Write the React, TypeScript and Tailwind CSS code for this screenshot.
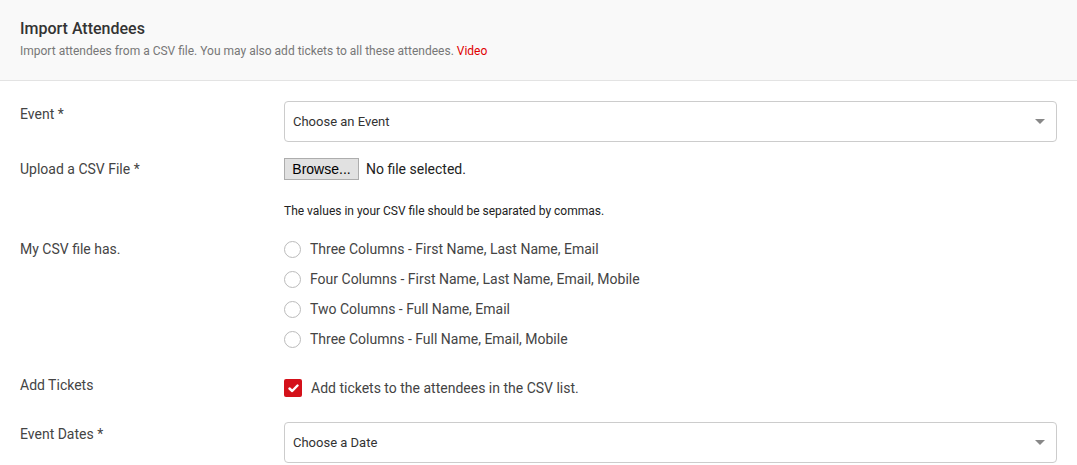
import { useState } from 'react';

const options = [
  'Three Columns - First Name, Last Name, Email',
  'Four Columns - First Name, Last Name, Email, Mobile',
  'Two Columns - Full Name, Email',
  'Three Columns - Full Name, Email, Mobile',
];

function SelectBox({ placeholder }: { placeholder: string }) {
  return (
    <div className="flex h-[41px] items-center justify-between rounded-[4px] border border-[#cccccc] bg-white pl-2 pr-[11px]">
      <span className="text-[13px] text-[#333]">{placeholder}</span>
      <svg width="10" height="5" viewBox="0 0 10 5">
        <path d="M0 0 L10 0 L5 5 Z" fill="#888" />
      </svg>
    </div>
  );
}

export default function App() {
  const [format, setFormat] = useState<number | null>(null);
  const [addTickets, setAddTickets] = useState(true);

  return (
    <div className="min-h-screen bg-white font-['Roboto',sans-serif] text-[14px] text-[#444]">
      <div className="h-[81px] border-b border-[#e3e3e3] bg-[#f9f9f9] px-5 pt-[19px]">
        <h1 className="text-[16px] leading-[20px] font-medium text-[#333]">Import Attendees</h1>
        <p className="mt-[4px] text-[12px] leading-[16px] text-[#777]">
          Import attendees from a CSV file. You may also add tickets to all these attendees.{' '}
          <a href="#" className="text-[#e00000]">Video</a>
        </p>
      </div>

      <div className="grid grid-cols-[264px_1fr] pt-5 pr-[20px] pl-5">
        {/* Event */}
        <div className="pt-[3px] leading-[20px]">Event *</div>
        <SelectBox placeholder="Choose an Event" />

        {/* Upload */}
        <div className="mt-[16px] flex h-[22px] items-center">Upload a CSV File *</div>
        <div className="mt-[16px] flex h-[22px] items-center gap-[7px]">
          <button className="h-[22px] w-[75px] border border-[#adadad] bg-[#e1e1e1] font-['Liberation_Sans',sans-serif] text-[14px] text-black">
            Browse...
          </button>
          <span className="text-[14px] text-[#222]">No file selected.</span>
        </div>

        <div />
        <div className="mt-[23px] text-[12px] leading-[16px] text-[#222]">
          The values in your CSV file should be separated by commas.
        </div>

        {/* CSV format */}
        <div className="mt-[15px] flex h-[30px] items-center">My CSV file has.</div>
        <div className="mt-[15px] flex flex-col">
          {options.map((opt, i) => (
            <label key={i} className="flex h-[30px] cursor-pointer items-center gap-[9px]">
              <span
                onClick={() => setFormat(i)}
                className="flex h-[17px] w-[17px] items-center justify-center rounded-full border border-[#bbbbbb] bg-white"
              >
                {format === i && <span className="h-[9px] w-[9px] rounded-full bg-[#d0121a]" />}
              </span>
              <span>{opt}</span>
            </label>
          ))}
        </div>

        {/* Add tickets */}
        <div className="mt-[19px] pt-[2px] leading-[20px]">Add Tickets</div>
        <label className="mt-[19px] flex h-[30px] cursor-pointer items-center gap-[9px]">
          <span
            onClick={() => setAddTickets(!addTickets)}
            className={`flex h-[18px] w-[18px] items-center justify-center rounded-[2px] ${
              addTickets ? 'bg-[#d4111a]' : 'border border-[#bbbbbb] bg-white'
            }`}
          >
            {addTickets && (
              <svg width="11" height="9" viewBox="0 0 11 9">
                <path d="M1.5 4.5 L4.2 7 L9.5 1.5" stroke="white" strokeWidth="2.4" fill="none" strokeLinecap="round" strokeLinejoin="round" />
              </svg>
            )}
          </span>
          <span>Add tickets to the attendees in the CSV list.</span>
        </label>

        {/* Event dates */}
        <div className="mt-[19px] pt-[2px] leading-[20px]">Event Dates *</div>
        <div className="mt-[19px]">
          <SelectBox placeholder="Choose a Date" />
        </div>
      </div>
    </div>
  );
}
